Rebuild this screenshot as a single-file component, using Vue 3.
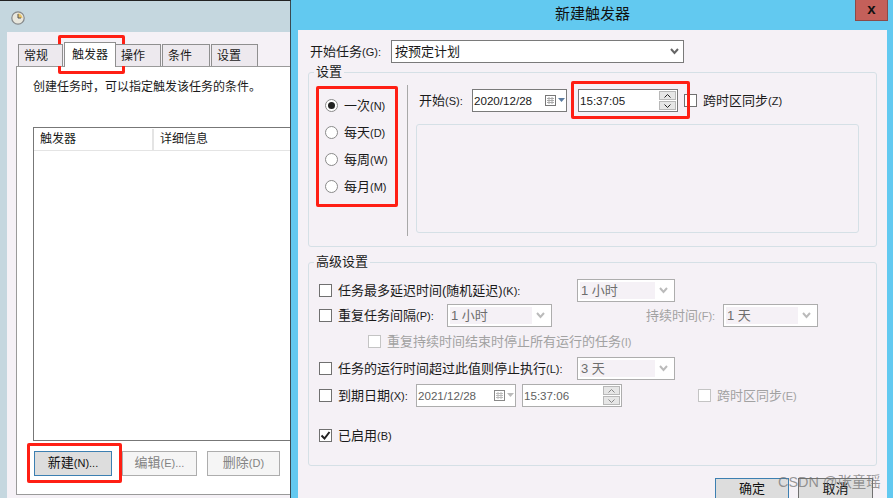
<script setup>
const tabs = [
  { name: '常规', w: 45 },
  { name: '触发器', w: 52, active: true },
  { name: '操作', w: 46 },
  { name: '条件', w: 48 },
  { name: '设置', w: 47 }
]
const radios = [
  { label: '一次', key: '(N)', on: true },
  { label: '每天', key: '(D)' },
  { label: '每周', key: '(W)' },
  { label: '每月', key: '(M)' }
]
</script>

<template>
  <div class="desk">
    <section class="win left">
      <header class="lbar">
        <svg class="clock" width="14" height="14" viewBox="0 0 14 14">
          <circle cx="7" cy="7" r="6.2" fill="#e8e6dc" stroke="#85888a" stroke-width="1.2" />
          <path d="M7 7V2.6A4.4 4.4 0 0 1 11.4 7Z" fill="#e9c46a" />
          <path d="M7 3v4h3" fill="none" stroke="#555" stroke-width="1" />
        </svg>
      </header>
      <div class="lpane">
        <nav class="tabs">
          <span v-for="t in tabs" :key="t.name" class="tab" :class="{ active: t.active }" :style="{ width: t.w + 'px' }">{{ t.name }}</span>
        </nav>
        <div class="page">
          <p class="intro">创建任务时，可以指定触发该任务的条件。</p>
          <div class="list">
            <div class="lhead">
              <span class="c1">触发器</span>
              <span class="c2">详细信息</span>
            </div>
          </div>
          <div class="lbtns">
            <button class="btn primary w78">新建<small>(N)...</small></button>
            <button class="btn off w75">编辑<small>(E)...</small></button>
            <button class="btn off w73">删除<small>(D)</small></button>
          </div>
        </div>
      </div>
    </section>

    <section class="win right">
      <header class="rbar">
        <span class="rtitle">新建触发器</span>
        <span class="close">x</span>
      </header>
      <div class="rpane">
        <div class="startrow">
          <label class="startlabel">开始任务<small>(G):</small></label>
          <div class="mainselect">
            <span>按预定计划</span>
            <svg width="9" height="7" viewBox="0 0 9 7"><path d="M1 1l3.500 4L8 1" fill="none" stroke="#666" stroke-width="2" /></svg>
          </div>
        </div>

        <div class="group settings">
          <span class="legend">设置</span>
          <div class="setbody">
            <div class="radios">
              <div v-for="r in radios" :key="r.label" class="radio">
                <span class="dot" :class="{ on: r.on }"></span>
                <span>{{ r.label }}<small>{{ r.key }}</small></span>
              </div>
            </div>
            <div class="setright">
              <div class="when">
                <span class="whenlabel">开始<small>(S):</small></span>
                <div class="field date">
                  <span>2020/12/28</span>
                  <svg class="cal" width="22" height="13" viewBox="0 0 22 13">
                    <rect x="1.500" y="1.500" width="10" height="10" fill="#fff" stroke="#777" />
                    <path d="M3 4.500h7M3 6.500h7M3 8.500h7M5 3v7M8 3v7" stroke="#aaa" />
                    <path d="M14 4h7l-3.500 4Z" fill="#5b7ba0" />
                  </svg>
                </div>
                <div class="field time">
                  <span>15:37:05</span>
                  <div class="spin">
                    <i><svg width="7" height="4" viewBox="0 0 7 4"><path d="M.5 3.500l3-3 3 3" fill="none" stroke="#222" /></svg></i>
                    <i><svg width="7" height="4" viewBox="0 0 7 4"><path d="M.5.5l3 3 3-3" fill="none" stroke="#222" /></svg></i>
                  </div>
                </div>
                <span class="check tz"></span>
                <span class="tzlabel">跨时区同步<small>(Z)</small></span>
              </div>
              <div class="detail"></div>
            </div>
          </div>
        </div>

        <div class="group advanced">
          <span class="legend">高级设置</span>
          <div class="arow r1">
            <span class="check"></span>
            <span class="alabel w239">任务最多延迟时间(随机延迟)<small>(K):</small></span>
            <div class="dis w98"><span class="val">1 小时</span><svg width="9" height="7" viewBox="0 0 9 7"><path d="M1 1l3.500 4L8 1" fill="none" stroke="#bbb" stroke-width="2" /></svg></div>
          </div>
          <div class="arow r2">
            <span class="check"></span>
            <span class="alabel w109">重复任务间隔<small>(P):</small></span>
            <div class="dis w105"><span class="val">1 小时</span><svg width="9" height="7" viewBox="0 0 9 7"><path d="M1 1l3.500 4L8 1" fill="none" stroke="#bbb" stroke-width="2" /></svg></div>
            <span class="grey dur">持续时间<small>(F):</small></span>
            <div class="dis w95"><span class="val">1 天</span><svg width="9" height="7" viewBox="0 0 9 7"><path d="M1 1l3.500 4L8 1" fill="none" stroke="#bbb" stroke-width="2" /></svg></div>
          </div>
          <div class="arow r3">
            <span class="check faded"></span>
            <span class="grey">重复持续时间结束时停止所有运行的任务<small>(I)</small></span>
          </div>
          <div class="arow r4">
            <span class="check"></span>
            <span class="alabel w239">任务的运行时间超过此值则停止执行<small>(L):</small></span>
            <div class="dis w98"><span class="val">3 天</span><svg width="9" height="7" viewBox="0 0 9 7"><path d="M1 1l3.500 4L8 1" fill="none" stroke="#bbb" stroke-width="2" /></svg></div>
          </div>
          <div class="arow r5">
            <span class="check"></span>
            <span class="alabel w78">到期日期<small>(X):</small></span>
            <div class="field date2 grayed">
              <span>2021/12/28</span>
              <svg class="cal" width="22" height="13" viewBox="0 0 22 13">
                <rect x="1.500" y="1.500" width="10" height="10" fill="#fff" stroke="#888" />
                <path d="M3 4.500h7M3 6.500h7M3 8.500h7M5 3v7M8 3v7" stroke="#bbb" />
                <path d="M14 4h7l-3.500 4Z" fill="#bbb" />
              </svg>
            </div>
            <div class="field time2 grayed">
              <span>15:37:06</span>
              <div class="spin">
                <i><svg width="7" height="4" viewBox="0 0 7 4"><path d="M.5 3.500l3-3 3 3" fill="none" stroke="#888" /></svg></i>
                <i><svg width="7" height="4" viewBox="0 0 7 4"><path d="M.5.5l3 3 3-3" fill="none" stroke="#888" /></svg></i>
              </div>
            </div>
            <span class="check faded tz2"></span>
            <span class="grey">跨时区同步<small>(E)</small></span>
          </div>
          <div class="arow r6">
            <span class="check">
              <svg width="11" height="11" viewBox="0 0 11 11"><path d="M1.500 5.500l3 3 5-6.500" fill="none" stroke="#222" stroke-width="2" /></svg>
            </span>
            <span class="alabel">已启用<small>(B)</small></span>
          </div>
        </div>

        <div class="rbtns">
          <button class="btn primary w74">确定</button>
          <button class="btn plain w75">取消</button>
        </div>
      </div>
    </section>

    <span class="mark m-tab"></span>
    <span class="mark m-new"></span>
    <span class="mark m-radio"></span>
    <span class="mark m-time"></span>
    <span class="wm">CSDN @张童瑶</span>
  </div>
</template>

<style scoped>
.desk {
  position: relative;
  width: 893px;
  height: 498px;
  overflow: hidden;
  background: #62c9f0;
  font: 13px/16px "Liberation Sans", "Noto Sans CJK SC", sans-serif;
  color: #1a1a1a;
}
small { font-size: 11px; }
.win { position: absolute; top: 0; height: 498px; display: flex; flex-direction: column; box-sizing: border-box; overflow: hidden; }
.left { left: 0; width: 291px; background: #c5d7df; border-top: 1px solid #222; border-right: 1px solid #3a4a52; }
.right { left: 291px; width: 602px; background: #62c9f0; }

.lbar { height: 31px; flex: none; display: flex; align-items: center; padding: 2px 0 0 11px; box-sizing: border-box; }
.lpane { flex: 1; margin-left: 7px; background: #f5f1f6; padding-top: 10px; display: flex; flex-direction: column; min-height: 0; }
.tabs { display: flex; align-items: flex-end; height: 24px; padding-left: 11px; gap: 1px; flex: none; position: relative; z-index: 1; }
.tab { height: 22px; box-sizing: border-box; border: 1px solid #8f8f8f; border-bottom: 0; background: #ede9ee; padding-left: 5px; line-height: 22px; font-size: 12px; }
.tab.active { height: 25px; margin-bottom: -1px; margin-right: -2px; padding-left: 0; text-align: center; background: #fff; line-height: 24px; position: relative; z-index: 2; }
.page { margin-left: 9px; height: 429px; flex: none; box-sizing: border-box; background: #fff; border: 1px solid #9a9a9a; border-right: 0; padding: 10px 0 0 16px; }
.intro { margin: 0; height: 20px; line-height: 20px; font-size: 12px; }
.list { margin-top: 30px; height: 314px; box-sizing: border-box; border: 1px solid #777; border-right: 0; }
.lhead { display: flex; height: 22px; align-items: center; border-bottom: 1px solid #e4e4e4; font-size: 12px; }
.c1 { width: 120px; padding-left: 6px; box-sizing: border-box; border-right: 2px solid #e4e4e4; height: 21px; line-height: 21px; }
.c2 { padding-left: 6px; line-height: 21px; }
.lbtns { display: flex; margin-top: 10px; padding-left: 1px; gap: 10px; }

.btn { height: 25px; padding: 0 0 1px; box-sizing: border-box; font: inherit; text-align: center; }
.primary { background: #dddddd; border: 1px solid #3c7fb1; color: #111; }
.off { background: #f5f5f5; border: 1px solid #adadad; color: #838383; }
.plain { background: #dddddd; border: 1px solid #707070; color: #111; }
.w78 { width: 78px; } .w75 { width: 75px; } .w73 { width: 73px; } .w74 { width: 74px; }
.rbtns .btn { height: 20px; padding-top: 1px; border-bottom: 0; }

.rbar { height: 30px; flex: none; position: relative; display: flex; justify-content: center; align-items: center; padding-left: 1px; }
.rtitle { font-size: 15px; color: #111; margin-top: -2px; }
.close { position: absolute; top: 0; left: 564px; width: 33px; height: 21px; box-sizing: border-box; background: #c4605a; border: 1px solid #8c4a48; border-top: 0; text-align: center; font: bold 15px/17px "Liberation Sans", sans-serif; color: #111; }
.rpane { flex: 1; margin: 0 6px 0 7px; background: #f5f1f6; min-height: 0; overflow: hidden; }
.startrow { display: flex; align-items: center; margin-top: 10px; height: 23px; padding-left: 12px; }
.startlabel { width: 81px; }
.mainselect { width: 293px; height: 23px; box-sizing: border-box; background: #fff; border: 1px solid #7a7a7a; display: flex; align-items: center; justify-content: space-between; padding: 0 4px 0 3px; }

.group { position: relative; margin-left: 10px; width: 569px; box-sizing: border-box; border: 1px solid #d5e0e6; border-radius: 3px; }
.legend { display: block; width: fit-content; margin: -9px 0 0 5px; padding: 0 2px; height: 16px; background: #f5f1f6; }
.settings { margin-top: 9px; height: 175px; }
.setbody { display: flex; height: 165px; margin-top: -7px; }
.radios { width: 98px; flex: none; padding-top: 19px; box-sizing: border-box; }
.radio { height: 27px; display: flex; align-items: center; padding-left: 16px; gap: 6px; }
.dot { width: 13px; height: 13px; box-sizing: border-box; border: 1px solid #8a8a8a; border-radius: 50%; background: #fff; display: flex; align-items: center; justify-content: center; }
.dot.on::after { content: ""; width: 7px; height: 7px; border-radius: 50%; background: #222; }
.setright { border-left: 1px solid #a8a8a8; margin-top: 12px; padding: 4px 0 0 11px; height: 151px; box-sizing: border-box; }
.when { display: flex; align-items: center; height: 23px; }
.whenlabel { width: 53px; flex: none; }
.field { height: 23px; box-sizing: border-box; background: #fff; border: 1px solid #7a7a7a; display: flex; align-items: center; justify-content: space-between; padding-left: 1px; flex: none; font-size: 11.6px; }
.date { width: 95px; }
.time { width: 100px; margin-left: 11px; }
.spin { display: flex; flex-direction: column; gap: 1px; margin-right: 1px; }
.spin i { display: flex; align-items: center; justify-content: center; width: 17px; height: 9px; background: #e6e6e6; border: 1px solid #b8b8b8; box-sizing: border-box; }
.check { width: 13px; height: 13px; flex: none; box-sizing: border-box; border: 1px solid #707070; background: #fff; display: flex; align-items: center; justify-content: center; }
.check.faded { border-color: #c4c4c4; }
.tz { margin-left: 6px; }
.tzlabel { margin-left: 6px; }
.detail { margin: 12px 0 0 -3px; width: 443px; height: 109px; box-sizing: border-box; border: 1px solid #d5e0e6; border-radius: 3px; }

.advanced { margin-top: 15px; height: 204px; padding-left: 10px; }
.advanced .legend { margin-left: -5px; }
.arow { display: flex; align-items: center; height: 23px; }
.r1 { margin-top: 9px; }
.r2 { margin-top: 2px; }
.r3 { margin-top: 3px; padding-left: 49px; gap: 6px; }
.r4 { margin-top: 4px; }
.r5 { margin-top: 4px; }
.r6 { margin-top: 17px; }
.alabel { margin-left: 6px; flex: none; white-space: nowrap; }
.w239 { width: 239px; }
.w109 { width: 109px; }
.alabel.w78 { width: 78px; }
.dis { height: 23px; flex: none; box-sizing: border-box; background: #fff; border: 1px solid #adadad; display: flex; align-items: center; justify-content: space-between; padding: 2px 6px 2px 2px; color: #6d6d6d; }
.val { flex: 0 0 auto; height: 17px; line-height: 17px; background: #f5f1f6; padding-left: 1px; box-sizing: border-box; }
.w98 { width: 98px; } .w98 .val { width: 75px; }
.w105 { width: 105px; } .w105 .val { width: 82px; }
.w95 { width: 95px; } .w95 .val { width: 72px; }
.grey { color: #a2a2a2; }
.dur { width: 77px; margin-left: 94px; flex: none; white-space: nowrap; }
.grayed { border-color: #adadad; color: #5f5f5f; }
.date2 { width: 100px; }
.time2 { width: 100px; margin-left: 6px; }
.tz2 { margin-left: 76px; margin-right: 6px; }
.rbtns { display: flex; justify-content: flex-end; gap: 9px; margin-top: 12px; padding-right: 14px; }

.mark { position: absolute; box-sizing: border-box; border: 3px solid #ff1f14; border-radius: 2px; }
.m-tab { left: 58px; top: 35px; width: 67px; height: 39px; }
.m-new { left: 27px; top: 443px; width: 95px; height: 40px; }
.m-radio { left: 316px; top: 86px; width: 82px; height: 121px; }
.m-time { left: 571px; top: 81px; width: 119px; height: 38px; }
.wm { position: absolute; left: 778px; top: 474px; font-size: 14.4px; color: rgba(110, 110, 110, 0.7); white-space: nowrap; }
</style>
